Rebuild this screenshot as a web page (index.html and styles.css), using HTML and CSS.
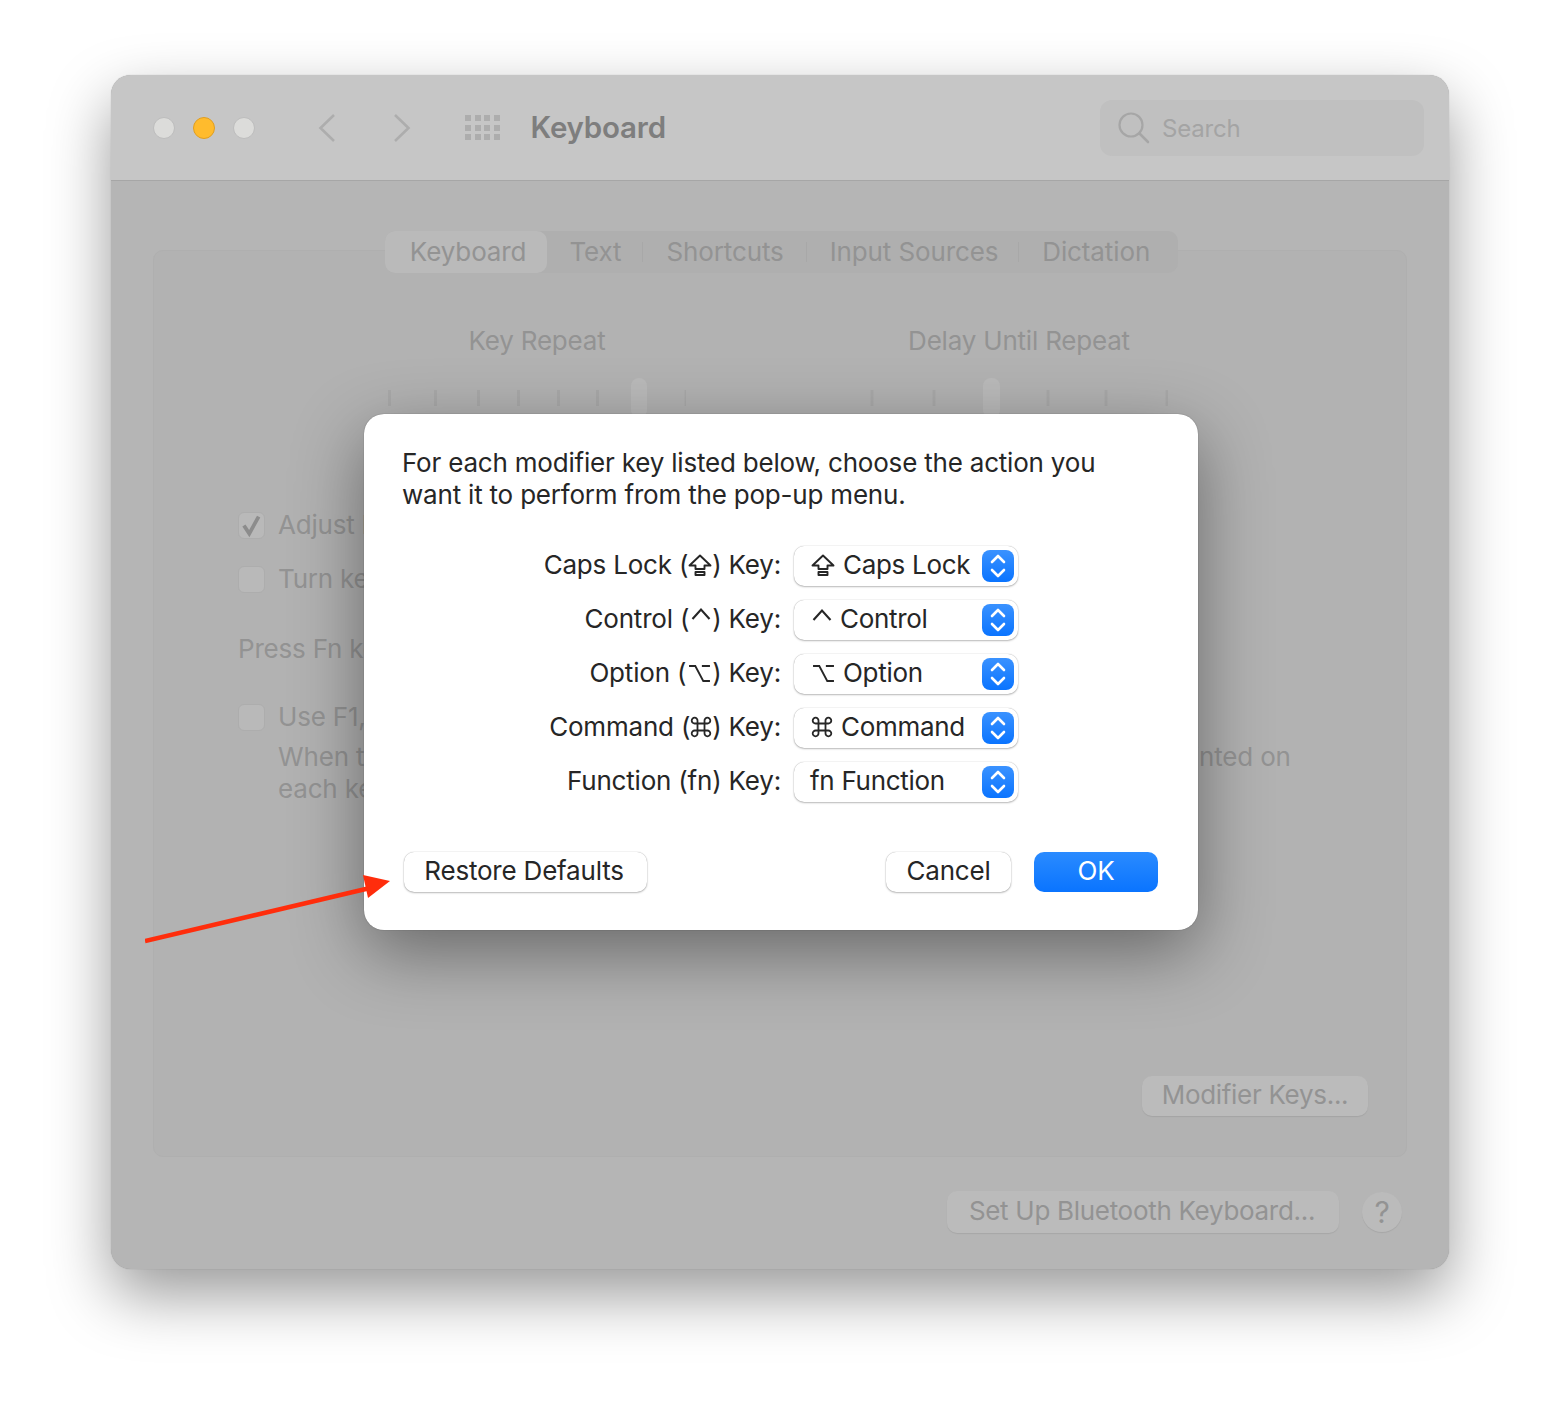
FILE: index.html
```html
<!DOCTYPE html>
<html lang="en">

<head>
 <meta charset="UTF-8">
 <meta name="viewport" content="width=device-width, initial-scale=1.0">
 <link rel="stylesheet" href="styles.css">
 <title>Keyboard - System Preferences</title>
</head>

<body>
 <svg class="icon-defs" aria-hidden="true">
  <symbol id="sym-caps" viewBox="0 0 24 22">
   <path d="M12 1.5 L22.5 11.5 H16.5 V15 H7.5 V11.5 H1.5 Z M7.5 18 H16.5 V21 H7.5 Z" fill="none" stroke="currentColor" stroke-width="1.9" stroke-linejoin="round" />
  </symbol>
  <symbol id="sym-control" viewBox="0 0 20 14">
   <path d="M1.5 12 L10 2.5 L18.5 12" fill="none" stroke="currentColor" stroke-width="2.1" />
  </symbol>
  <symbol id="sym-option" viewBox="0 0 24 20">
   <path d="M1 2 H7.5 L16 18 H23 M14.5 2 H23" fill="none" stroke="currentColor" stroke-width="2.1" />
  </symbol>
  <symbol id="sym-command" viewBox="0 0 22 22">
   <path d="M7.5 7.5 H4.7 a2.9 2.9 0 1 1 2.8 -2.8 V17.3 a2.9 2.9 0 1 1 -2.8 -2.8 H17.3 a2.9 2.9 0 1 1 -2.8 2.8 V4.7 a2.9 2.9 0 1 1 2.8 2.8 Z" fill="none" stroke="currentColor" stroke-width="1.8" />
  </symbol>
  <symbol id="sym-stepper" viewBox="0 0 32 32">
   <path d="M10 12 L16 6 L22 12 M10 20 L16 26 L22 20" fill="none" stroke="#fff" stroke-width="2.6" stroke-linecap="round" stroke-linejoin="round" />
  </symbol>
 </svg>

 <div class="window">
  <div class="titlebar">
   <div class="lights">
    <span class="light"></span>
    <span class="light light-min"></span>
    <span class="light"></span>
   </div>
   <svg class="nav-icon nav-back" viewBox="0 0 18 30" aria-hidden="true">
    <path d="M16 2 L2.5 15 L16 28" fill="none" stroke="#adadad" stroke-width="2.6" />
   </svg>
   <svg class="nav-icon nav-forward" viewBox="0 0 18 30" aria-hidden="true">
    <path d="M2 2 L15.5 15 L2 28" fill="none" stroke="#adadad" stroke-width="2.6" />
   </svg>
   <div class="grid-icon">
    <i></i><i></i><i></i><i></i><i></i><i></i><i></i><i></i><i></i><i></i><i></i><i></i>
   </div>
   <div class="window-title">Keyboard</div>
   <div class="search">
    <svg class="search-icon" viewBox="0 0 32 32" aria-hidden="true">
     <circle cx="13" cy="13" r="11.5" fill="none" stroke="#a6a6a6" stroke-width="2.2" />
     <path d="M21.5 21.5 L30 30" fill="none" stroke="#a6a6a6" stroke-width="2.6" stroke-linecap="round" />
    </svg>
    <span>Search</span>
   </div>
  </div>

  <div class="content">
   <div class="panel">
    <div class="tabs">
     <div class="tab tab-active">Keyboard</div>
     <div class="tab tab-text">Text</div>
     <div class="tab tab-line">Shortcuts</div>
     <div class="tab tab-line tab-input">Input Sources</div>
     <div class="tab tab-line tab-last">Dictation</div>
    </div>

    <div class="sliders">
     <div class="slider">
      <div class="slider-label">Key Repeat</div>
      <svg class="slider-scale" viewBox="0 0 298 40" aria-hidden="true">
       <path d="M1.500 12 V28 M47.500 12 V28 M90.500 12 V28 M130.500 12 V28 M170.500 12 V28 M209.500 12 V28 M298 12 V28" stroke="#a9a9a9" stroke-width="3" />
       <rect x="243" y="0" width="16" height="40" rx="8" fill="#bababa" />
      </svg>
     </div>
     <div class="slider">
      <div class="slider-label">Delay Until Repeat</div>
      <svg class="slider-scale" viewBox="0 0 298 40" aria-hidden="true">
       <path d="M2 12 V28 M64 12 V28 M178 12 V28 M236 12 V28 M297 12 V28" stroke="#a9a9a9" stroke-width="3" />
       <rect x="113" y="0" width="17" height="40" rx="8" fill="#bababa" />
      </svg>
     </div>
    </div>

    <div class="options">
     <div class="check-row">
      <span class="checkbox">
       <svg viewBox="0 0 28 28" aria-hidden="true">
        <path d="M5.500 14 L11.500 23 L22 4" fill="none" stroke="#8c8c8c" stroke-width="4.200" />
       </svg>
      </span>
      Adjust keyboard brightness in low light
     </div>
     <div class="check-row row-turn">
      <span class="checkbox"></span>
      Turn keyboard backlight off after 5 secs of inactivity
     </div>
     <div class="press-row">Press Fn key to Show Emoji &amp; Symbols</div>
     <div class="check-row row-use">
      <span class="checkbox"></span>
      Use F1, F2, etc. keys as standard function keys
     </div>
     <div class="option-note">
      When this option is selected, press the Fn key to use the special features printed on<br>
      each key.
     </div>
    </div>

    <div class="panel-foot">
     <div class="dim-button modifier-button">Modifier Keys...</div>
    </div>
   </div>

   <div class="window-foot">
    <div class="dim-button bluetooth-button">Set Up Bluetooth Keyboard...</div>
    <div class="help-button">?</div>
   </div>
  </div>

  <div class="dialog">
   <p class="dialog-text">For each modifier key listed below, choose the action you<br>want it to perform from the pop-up menu.</p>

   <div class="key-rows">
    <div class="key-label">Caps Lock (<svg class="sym sym-caps" aria-label="caps lock symbol"><use href="#sym-caps" /></svg>) Key:</div>
    <div class="popup">
     <svg class="sym sym-caps popup-sym" aria-hidden="true"><use href="#sym-caps" /></svg>
     <span>Caps Lock</span>
     <svg class="stepper" aria-hidden="true"><use href="#sym-stepper" /></svg>
    </div>

    <div class="key-label">Control (<svg class="sym sym-control" aria-label="control symbol"><use href="#sym-control" /></svg>) Key:</div>
    <div class="popup">
     <svg class="sym sym-control popup-sym" aria-hidden="true"><use href="#sym-control" /></svg>
     <span>Control</span>
     <svg class="stepper" aria-hidden="true"><use href="#sym-stepper" /></svg>
    </div>

    <div class="key-label">Option (<svg class="sym sym-option" aria-label="option symbol"><use href="#sym-option" /></svg>) Key:</div>
    <div class="popup">
     <svg class="sym sym-option popup-sym" aria-hidden="true"><use href="#sym-option" /></svg>
     <span>Option</span>
     <svg class="stepper" aria-hidden="true"><use href="#sym-stepper" /></svg>
    </div>

    <div class="key-label">Command (<svg class="sym sym-command" aria-label="command symbol"><use href="#sym-command" /></svg>) Key:</div>
    <div class="popup">
     <svg class="sym sym-command popup-sym" aria-hidden="true"><use href="#sym-command" /></svg>
     <span>Command</span>
     <svg class="stepper" aria-hidden="true"><use href="#sym-stepper" /></svg>
    </div>

    <div class="key-label">Function (fn) Key:</div>
    <div class="popup">
     <span>fn Function</span>
     <svg class="stepper" aria-hidden="true"><use href="#sym-stepper" /></svg>
    </div>
   </div>

   <div class="dialog-buttons">
    <div class="push-button restore-button">Restore Defaults</div>
    <div class="push-button cancel-button">Cancel</div>
    <div class="push-button ok-button">OK</div>
   </div>
  </div>
 </div>

 <svg class="arrow" viewBox="0 0 260 80" aria-hidden="true">
  <path d="M0 66 L225 13" fill="none" stroke="#ff2d0c" stroke-width="4.500" />
  <path d="M218 0 L245 6 L223 23 Z" fill="#ff2d0c" />
 </svg>
</body>

</html>
```

FILE: styles.css
```css
/* Reset */
body,
p {
 margin: 0;
 padding: 0;
}

* {
 box-sizing: border-box;
}

body {
 position: relative;
 width: 1560px;
 height: 1416px;
 padding: 75px 111px 0;
 overflow: hidden;
 background-color: #FFF;
 color: #939393;
 font-family: Inter, "Noto Sans", sans-serif;
 font-size: 26px;
 letter-spacing: -0.2px;
 line-height: 32px;
}

.icon-defs {
 position: absolute;
 width: 0;
 height: 0;
}

/* Window */
.window {
 position: relative;
 width: 1338px;
 height: 1194px;
 border-radius: 20px;
 background-color: #B5B5B5;
 box-shadow: 0 0 1px rgba(0, 0, 0, 0.3), 0 26px 62px rgba(0, 0, 0, 0.4);
}

.titlebar {
 display: flex;
 align-items: center;
 height: 106px;
 padding: 0 25px 0 42px;
 border-bottom: 1px solid #A6A6A6;
 border-radius: 20px 20px 0 0;
 background-color: #C6C6C6;
}

.lights {
 display: flex;
 gap: 18px;
}

.light {
 width: 22px;
 height: 22px;
 border: 1px solid #BDBDBD;
 border-radius: 50%;
 background-color: #DCDCDA;
}

.light-min {
 border-color: #E09E20;
 background-color: #FFBB2D;
}

.nav-icon {
 width: 18px;
 height: 30px;
}

.nav-back {
 margin-left: 63px;
}

.nav-forward {
 margin-left: 57px;
}

.grid-icon {
 display: grid;
 grid-template-columns: repeat(4, 6px);
 grid-auto-rows: 6px;
 gap: 3.500px;
 margin-left: 54px;
}

.grid-icon i {
 background-color: #ADADAD;
}

.window-title {
 margin-left: 31px;
 padding-bottom: 2px;
 color: #7E7E7E;
 font-size: 29.500px;
 font-weight: 600;
}

.search {
 display: flex;
 align-items: center;
 gap: 12px;
 width: 324px;
 height: 56px;
 margin-left: auto;
 padding-left: 18px;
 border-radius: 12px;
 background-color: #C0C0C0;
 color: #A4A4A4;
 font-size: 24px;
}

.search span {
 padding-top: 3px;
}

.search-icon {
 width: 32px;
 height: 32px;
}

/* Main pane */
.content {
 padding: 69px 42px 0;
}

.panel {
 display: flex;
 flex-direction: column;
 height: 907px;
 border: 1px solid #AFAFAF;
 border-radius: 10px;
 background-color: #B2B2B2;
}

.tabs {
 display: flex;
 align-self: center;
 align-items: center;
 height: 42px;
 margin: -20px 0 0 3px;
 border-radius: 10px;
 background-color: #AFAFAF;
 letter-spacing: -0.12px;
}

.tab {
 padding: 0 22px 0 23px;
 line-height: 20px;
}

.tab-active {
 display: flex;
 align-items: center;
 height: 42px;
 padding: 0 21px 0 25px;
 border-radius: 10px;
 background-color: #BABABA;
}

.tab-text {
 padding: 0 21px 0 22px;
}

.tab-line {
 border-left: 1px solid #A8A8A8;
}

.tab-input {
 padding-right: 20px;
}

.tab-last {
 padding-right: 28px;
}

.sliders {
 display: flex;
 gap: 184px;
 margin: 52px 0 0 234px;
}

.slider {
 width: 298px;
}

.slider-label {
 text-align: center;
}

.slider-scale {
 display: block;
 width: 298px;
 height: 40px;
 margin-top: 21px;
}

.options {
 margin: 91px 0 0 84px;
 white-space: nowrap;
}

.check-row {
 display: flex;
 align-items: center;
 gap: 13px;
}

.row-turn {
 margin-top: 22px;
}

.row-use {
 margin-top: 36px;
}

.press-row {
 margin-top: 38px;
}

.option-note {
 margin: 8px 0 0 40px;
 letter-spacing: -0.17px;
}

.checkbox {
 width: 27px;
 height: 27px;
 border: 1px solid #ADADAD;
 border-radius: 6px;
 background-color: #B9B9B9;
}

.checkbox svg {
 display: block;
 width: 25px;
 height: 25px;
}

.panel-foot {
 display: flex;
 justify-content: flex-end;
 margin-top: auto;
 padding: 0 38px 40px 0;
}

.dim-button {
 height: 40px;
 border-radius: 10px;
 background-color: #BBBBBB;
 box-shadow: 0 1px 1px rgba(0, 0, 0, 0.08);
 letter-spacing: -0.3px;
 line-height: 38px;
 text-align: center;
}

.modifier-button {
 width: 226px;
}

.window-foot {
 display: flex;
 justify-content: flex-end;
 align-items: center;
 gap: 23px;
 margin: 34px 5px 0 0;
}

.bluetooth-button {
 width: 392px;
 height: 42px;
 padding-right: 2px;
 line-height: 40px;
}

.help-button {
 width: 40px;
 height: 40px;
 border-radius: 50%;
 background-color: #BBBBBB;
 box-shadow: 0 1px 1px rgba(0, 0, 0, 0.08);
 font-size: 30px;
 line-height: 40px;
 text-align: center;
}

/* Modifier keys sheet */
.dialog {
 position: absolute;
 top: 339px;
 left: 253px;
 width: 834px;
 height: 516px;
 padding: 33px 40px 0 38px;
 border-radius: 20px;
 background-color: #FFF;
 box-shadow: 0 0 1px rgba(0, 0, 0, 0.5), 0 22px 70px rgba(0, 0, 0, 0.42);
 color: #262626;
}

.dialog-text {
 white-space: nowrap;
}

.key-rows {
 display: grid;
 grid-template-columns: 379px 224px;
 grid-auto-rows: 40px;
 row-gap: 14px;
 column-gap: 13px;
 align-items: center;
 margin-top: 35px;
}

.key-label {
 display: flex;
 justify-content: flex-end;
 align-items: center;
 padding-bottom: 2px;
 white-space: pre;
}

.key-label .sym-control,
.key-label .sym-option {
 margin: 0 1.500px;
}

.key-label .sym-control {
 margin-top: -10px;
}

.popup {
 display: flex;
 align-items: center;
 height: 40px;
 padding: 0 4px 0 17px;
 border-radius: 10px;
 background-color: #FFF;
 box-shadow: 0 0 1px rgba(0, 0, 0, 0.35), 0 1px 2px rgba(0, 0, 0, 0.25);
 letter-spacing: -0.3px;
}

.popup span {
 padding-bottom: 2px;
}

.popup span:first-child {
 margin-left: -1px;
}

.sym {
 flex-shrink: 0;
}

.sym-caps {
 width: 24px;
 height: 22px;
}

.sym-control {
 width: 20px;
 height: 14px;
 margin-top: -10px;
}

.sym-option {
 width: 23px;
 height: 19px;
}

.sym-command {
 width: 22px;
 height: 22px;
}

.popup-sym {
 margin-right: 8px;
 margin-bottom: 2px;
}

.popup .sym-control,
.popup .sym-option {
 margin-left: 1px;
}

.popup .sym-control {
 margin-bottom: 0;
}

.stepper {
 flex-shrink: 0;
 width: 32px;
 height: 32px;
 margin-left: auto;
 border-radius: 8px;
 background: linear-gradient(#3A92FF, #0A74FF);
}

.dialog-buttons {
 display: flex;
 margin-top: 50px;
}

.push-button {
 height: 40px;
 border-radius: 10px;
 background-color: #FFF;
 box-shadow: 0 0 1px rgba(0, 0, 0, 0.35), 0 1px 2px rgba(0, 0, 0, 0.25);
 line-height: 37px;
 text-align: center;
}

.restore-button {
 width: 243px;
 margin-left: 2px;
 padding-right: 3px;
}

.cancel-button {
 width: 125px;
 margin-left: auto;
}

.ok-button {
 width: 124px;
 margin-left: 23px;
 background: linear-gradient(#2A8BFF, #0A74FF);
 box-shadow: none;
 color: #FFF;
}

/* Annotation arrow on top of the screenshot */
.arrow {
 position: absolute;
 top: 875px;
 left: 145px;
 width: 260px;
 height: 80px;
}
```
